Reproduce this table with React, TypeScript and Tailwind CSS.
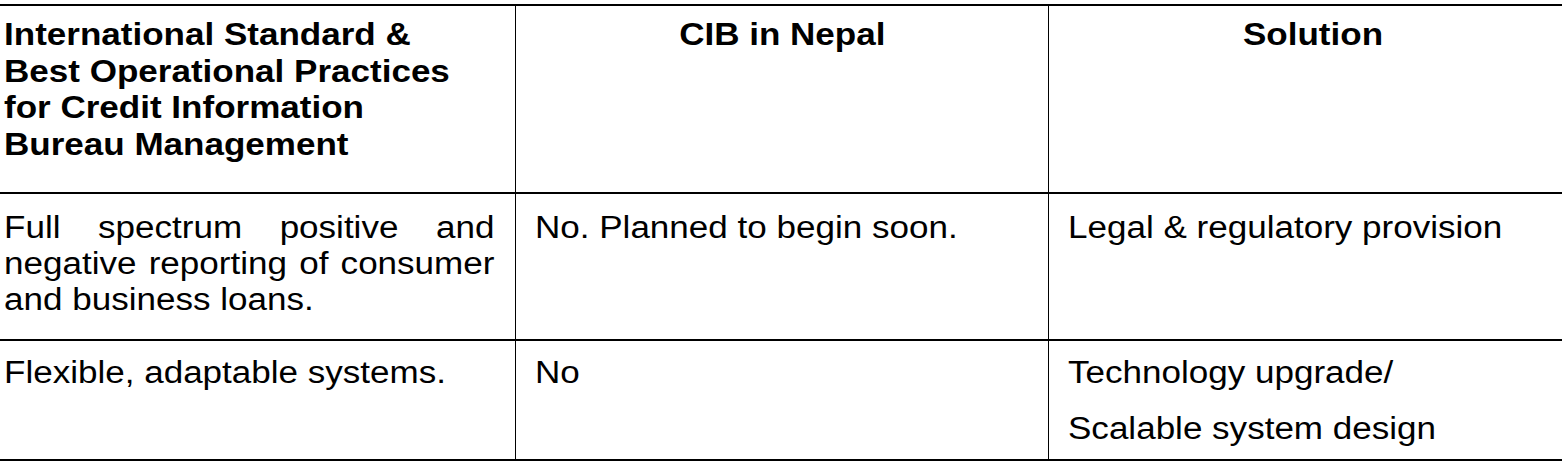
export default function App() {
  // the table text in the picture is a little wider than plain Arial, so it is stretched a bit on x
  const head = "font-bold text-[31px] leading-[36.5px] text-black scale-x-[1.13]";
  const body = "text-[31px] leading-[36px] text-black origin-left scale-x-[1.13]";

  return (
    <div className="min-h-screen overflow-hidden bg-white pt-1 font-['Liberation_Sans',Arial,sans-serif]">
      <div className="grid grid-cols-[516px_533px_1fr] border-t-2 border-black">
        {/* header row */}
        <div className="h-[188px] border-b-2 border-r border-black pl-1 pr-[21px] pt-[11px]">
          <p className={`${head} w-fit origin-left`}>
            International Standard &amp;
            <br />
            Best Operational Practices
            <br />
            for Credit Information
            <br />
            Bureau Management
          </p>
        </div>
        <div className="h-[188px] border-b-2 border-r border-black px-5 pt-[11px]">
          <p className={`${head} mx-auto w-fit`}>CIB in Nepal</p>
        </div>
        <div className="h-[188px] border-b-2 border-black pl-5 pr-[5px] pt-[11px]">
          <p className={`${head} mx-auto w-fit`}>Solution</p>
        </div>

        {/* row 1 */}
        <div className="h-[147px] border-b-2 border-r border-black pl-1 pt-4">
          <p className={`${body} w-[434px] text-justify`}>
            Full spectrum positive and negative reporting of consumer and business loans.
          </p>
        </div>
        <div className="h-[147px] border-b-2 border-r border-black pl-[19px] pt-4">
          <p className={`${body} w-fit`}>No. Planned to begin soon.</p>
        </div>
        <div className="h-[147px] border-b-2 border-black pl-[19px] pt-4">
          <p className={`${body} w-fit`}>Legal &amp; regulatory provision</p>
        </div>

        {/* row 2 */}
        <div className="h-[120px] border-b-2 border-r border-black pl-1 pt-[14px]">
          <p className={`${body} w-fit`}>Flexible, adaptable systems.</p>
        </div>
        <div className="h-[120px] border-b-2 border-r border-black pl-[19px] pt-[14px]">
          <p className={`${body} w-fit`}>No</p>
        </div>
        <div className="h-[120px] border-b-2 border-black pl-[19px] pt-[14px]">
          <p className={`${body} w-fit`}>Technology upgrade/</p>
          <p className={`${body} mt-5 w-fit`}>Scalable system design</p>
        </div>
      </div>
    </div>
  );
}
